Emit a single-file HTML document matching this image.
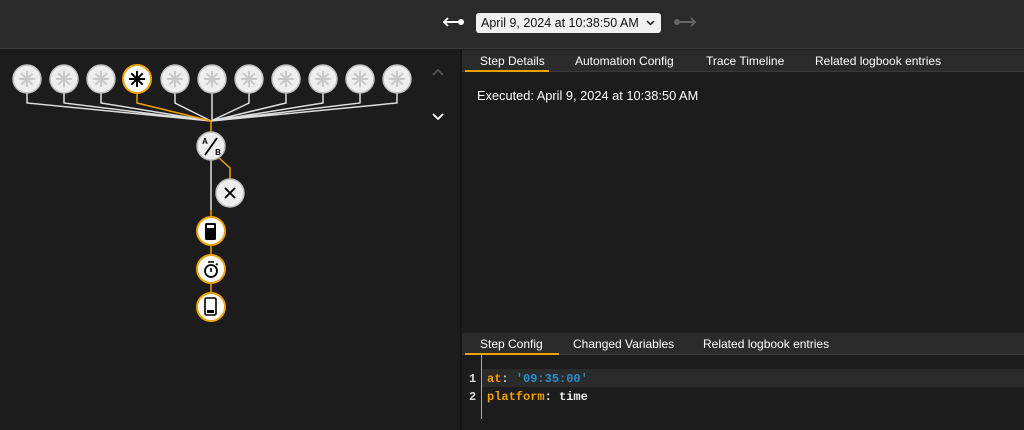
<!DOCTYPE html><html><head><style>
body{margin:0;width:1024px;height:430px;background:#1c1c1c;font-family:"Liberation Sans",sans-serif;overflow:hidden;position:relative;color:#e1e1e1}
.hdr{position:absolute;left:0;top:0;width:1024px;height:48px;background:#2a2a2b;border-bottom:1px solid #3a3a3a}
.sel{position:absolute;left:476px;top:13px;width:185px;height:20px;background:#f0f0f0;border-radius:3px;color:#111;font-size:12.5px;line-height:20px;box-sizing:border-box;padding-left:5px}
.div{position:absolute;left:460px;top:49px;width:2px;height:381px;background:#141414}
.tabs{position:absolute;left:462px;height:21px;width:562px;background:#2b2b2b;border-bottom:1px solid #3a3a3a;font-size:12px;color:#fff}
.tabs span{position:absolute;top:4px}
.ul{position:absolute;height:2px;background:#f0a000;bottom:-1px}
.code{position:absolute;font-family:"Liberation Mono",monospace;font-size:12px;font-weight:bold}
</style></head><body>
<div class="hdr"></div>
<svg style="position:absolute;left:442px;top:16px" width="24" height="12"><line x1="2" y1="6" x2="18" y2="6" stroke="#fff" stroke-width="2"/><path d="M6 2L2 6l4 4" stroke="#fff" stroke-width="1.8" fill="none"/><circle cx="19" cy="6" r="3" fill="#fff"/></svg>
<div class="sel">April 9, 2024 at 10:38:50 AM<svg style="position:absolute;right:6px;top:7px" width="9" height="6"><path d="M1 1l3.5 3.5L8 1" stroke="#111" stroke-width="1.5" fill="none"/></svg></div>
<svg style="position:absolute;left:673px;top:16px" width="24" height="12"><line x1="4" y1="6" x2="22" y2="6" stroke="#666" stroke-width="2"/><path d="M18 2l4 4-4 4" stroke="#666" stroke-width="1.8" fill="none"/><circle cx="4" cy="6" r="3" fill="#666"/></svg>
<div class="div"></div>
<div class="tabs" style="top:50px"><span style="left:18px">Step Details</span><span style="left:113px">Automation Config</span><span style="left:244px">Trace Timeline</span><span style="left:353px">Related logbook entries</span><div class="ul" style="left:3px;width:84px"></div></div>
<div style="position:absolute;left:477px;top:88px;font-size:12.8px;color:#fff">Executed: April 9, 2024 at 10:38:50 AM</div>
<div class="tabs" style="top:333px"><span style="left:18px">Step Config</span><span style="left:111px">Changed Variables</span><span style="left:241px">Related logbook entries</span><div class="ul" style="left:3px;width:94px"></div></div>
<div style="position:absolute;left:481px;top:354px;width:1px;height:65px;background:#aaa"></div>
<div style="position:absolute;left:482px;top:369px;width:542px;height:18px;background:#2a2a2a"></div>
<div class="code" style="left:469px;top:372px;color:#ddd">1</div>
<div class="code" style="left:469px;top:390px;color:#ddd">2</div>
<div class="code" style="left:487px;top:372px"><span style="color:#f0a000">at</span><span style="color:#ddd">: </span><span style="color:#2a8fd0">'09:35:00'</span></div>
<div class="code" style="left:487px;top:390px"><span style="color:#f0a000">platform</span><span style="color:#eee">: time</span></div>
<svg style="position:absolute;left:0;top:0" width="460" height="430">
<defs><g id="ast"><path d="M0 -8V8M-8 0H8M-5.7 -5.7L5.7 5.7M-5.7 5.7L5.7 -5.7" stroke-width="2"/></g></defs>
<g fill="none" stroke-width="1.5">
<g stroke="#ddd">
<path d="M27 93V103L211 121M64 93V103L211 121M101 93V103L211 121M175 93V103L211 121M212 93V121M249 93V103L211 121M286 93V103L211 121M323 93V103L211 121M360 93V103L211 121M397 93V103L211 121"/>
<path d="M211 160V210"/>
</g>
<g stroke="#f0a000"><path d="M137 93V103L211 121V132M219 158L230 168V179M211 210V217M211 245V255M211 283V293"/></g>
</g>
<g fill="#eee" stroke="#bbb" stroke-width="1.5">
<circle cx="27" cy="79" r="14"/><circle cx="64" cy="79" r="14"/><circle cx="101" cy="79" r="14"/><circle cx="175" cy="79" r="14"/><circle cx="212" cy="79" r="14"/><circle cx="249" cy="79" r="14"/><circle cx="286" cy="79" r="14"/><circle cx="323" cy="79" r="14"/><circle cx="360" cy="79" r="14"/><circle cx="397" cy="79" r="14"/>
<circle cx="211" cy="146" r="14"/><circle cx="230" cy="193" r="14"/></g>
<g fill="#fff" stroke="#f0a000" stroke-width="2"><circle cx="137" cy="79" r="14"/><circle cx="211" cy="231" r="14"/><circle cx="211" cy="269" r="14"/><circle cx="211" cy="307" r="14"/></g>
<g stroke="#c8c8c8"><use href="#ast" x="27" y="79"/><use href="#ast" x="64" y="79"/><use href="#ast" x="101" y="79"/><use href="#ast" x="175" y="79"/><use href="#ast" x="212" y="79"/><use href="#ast" x="249" y="79"/><use href="#ast" x="286" y="79"/><use href="#ast" x="323" y="79"/><use href="#ast" x="360" y="79"/><use href="#ast" x="397" y="79"/></g>
<g stroke="#000"><use href="#ast" x="137" y="79"/></g>
<g font-family="Liberation Sans" text-anchor="middle"><text x="205" y="144" font-size="8" font-weight="bold" fill="#000">A</text><text x="218" y="155" font-size="8" font-weight="bold" fill="#000">B</text></g>
<path d="M205 155L217 138M225 188L235 198M235 188L225 198" stroke="#000" stroke-width="1.8"/>
<rect x="205" y="223" width="11" height="17" rx="1.5" fill="#000"/><rect x="207" y="225" width="7" height="3" fill="#fff"/>
<circle cx="211" cy="271" r="6" fill="none" stroke="#000" stroke-width="1.8"/><path d="M208 262h6M211 268v4M216 265l1.5-1.5" stroke="#000" stroke-width="1.6"/>
<rect x="205" y="298" width="11" height="17" rx="1.5" fill="none" stroke="#000" stroke-width="1.6"/><rect x="207" y="310" width="7" height="3" fill="#000"/>
<path d="M433 75l5-5 5 5" stroke="#555" stroke-width="1.6" fill="none"/>
<path d="M433 114l5 5 5-5" stroke="#fff" stroke-width="1.8" fill="none"/>
</svg>
</body></html>
